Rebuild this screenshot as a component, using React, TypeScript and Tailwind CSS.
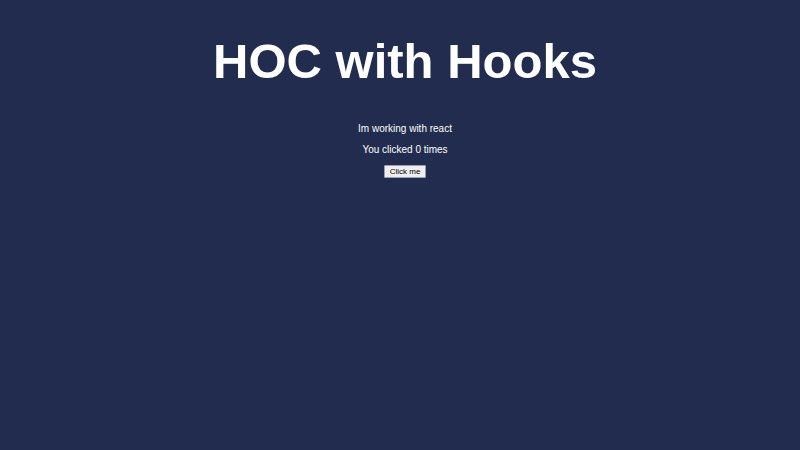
import { useState } from "react";
import type { ComponentType } from "react";

type CounterProps = {
  count: number;
  onIncrement: () => void;
};

function withCounter(Wrapped: ComponentType<CounterProps>) {
  return function WithCounter() {
    const [count, setCount] = useState(0);

    return (
      <Wrapped count={count} onIncrement={() => setCount((c) => c + 1)} />
    );
  };
}

function ClickCounter({ count, onIncrement }: CounterProps) {
  return (
    <>
      <p>You clicked {count} times</p>
      <button
        type="button"
        className="rounded-[1px] border border-gray-400 bg-[#efefef] px-[5px] text-[8px] leading-[11px] text-black hover:bg-gray-200"
        onClick={onIncrement}
      >
        Click me
      </button>
    </>
  );
}

const Counter = withCounter(ClickCounter);

export default function App() {
  return (
    <main className="flex min-h-screen flex-col items-center gap-2.5 bg-[#222c4e] pt-[33px] pl-2.5 text-center font-['Liberation_Sans',Arial,sans-serif] text-[10px] leading-[11px] text-white">
      <h1 className="mb-6 text-[49px] leading-14 font-bold">HOC with Hooks</h1>
      <p>Im working with react</p>
      <Counter />
    </main>
  );
}
